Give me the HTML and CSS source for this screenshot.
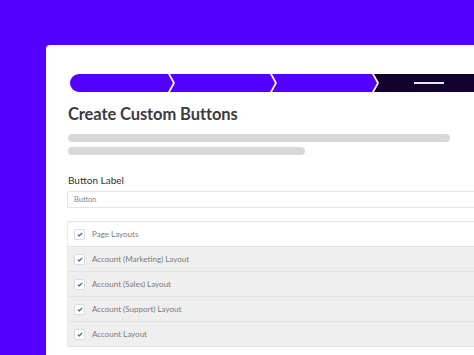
FILE: index.html
```html
<!DOCTYPE html>
<html>
<head>
<meta charset="utf-8">
<link rel="stylesheet" href="styles.css">
</head>
<body>
<div class="card">
  <div class="stepper">
    <div class="step step-first"></div>
    <div class="step step-mid"></div>
    <div class="step step-mid"></div>
    <div class="step step-last"><span class="dash"></span></div>
  </div>
  <h1 class="title">Create Custom Buttons</h1>
  <div class="skeleton">
    <div class="bar bar-long"></div>
    <div class="bar bar-short"></div>
  </div>
  <label class="field-label">Button Label</label>
  <div class="input">Button</div>
  <ul class="list">
    <li class="row row-white"><span class="check"><svg width="6" height="5" viewBox="0 0 6 5"><path d="M0.8 2.6 L2.3 4 L5.2 0.8" fill="none" stroke="#3a5d9c" stroke-width="1.2"/></svg></span>Page Layouts</li>
    <li class="row"><span class="check"><svg width="6" height="5" viewBox="0 0 6 5"><path d="M0.8 2.6 L2.3 4 L5.2 0.8" fill="none" stroke="#3a5d9c" stroke-width="1.2"/></svg></span>Account (Marketing) Layout</li>
    <li class="row"><span class="check"><svg width="6" height="5" viewBox="0 0 6 5"><path d="M0.8 2.6 L2.3 4 L5.2 0.8" fill="none" stroke="#3a5d9c" stroke-width="1.2"/></svg></span>Account (Sales) Layout</li>
    <li class="row"><span class="check"><svg width="6" height="5" viewBox="0 0 6 5"><path d="M0.8 2.6 L2.3 4 L5.2 0.8" fill="none" stroke="#3a5d9c" stroke-width="1.2"/></svg></span>Account (Support) Layout</li>
    <li class="row"><span class="check"><svg width="6" height="5" viewBox="0 0 6 5"><path d="M0.8 2.6 L2.3 4 L5.2 0.8" fill="none" stroke="#3a5d9c" stroke-width="1.2"/></svg></span>Account Layout</li>
  </ul>
</div>
</body>
</html>
```

FILE: styles.css
```css
html, body {
  margin: 0;
  padding: 0;
  background: #5200ff;
  height: 355px;
  overflow: hidden;
  font-family: "Lato", "Liberation Sans", sans-serif;
}
.card {
  margin: 45px 0 0 46px;
  height: 310px;
  background: #fff;
  border-top-left-radius: 4px;
  padding: 29px 0 0 22px;
  box-sizing: border-box;
  overflow: hidden;
}
.stepper {
  display: flex;
  height: 18px;
  margin-left: 2px;
}
.step {
  height: 18px;
  background: #5200ff;
  flex: none;
}
.step + .step {
  margin-left: -3px;
}
.step-first {
  width: 103px;
  border-radius: 9px 0 0 9px;
  clip-path: polygon(0 0, calc(100% - 5px) 0, 100% 50%, calc(100% - 5px) 100%, 0 100%);
}
.step-mid {
  width: 105px;
  clip-path: polygon(0 0, calc(100% - 5px) 0, 100% 50%, calc(100% - 5px) 100%, 0 100%, 5px 50%);
}
.step-last {
  flex: 1;
  background: #12002e;
  clip-path: polygon(0 0, 100% 0, 100% 100%, 0 100%, 5px 50%);
  display: flex;
  align-items: center;
  padding-left: 40px;
}
.dash {
  width: 30px;
  height: 2px;
  background: #e8e6f0;
}
.title {
  margin: 12px 0 0 0;
  font-size: 16.5px;
  font-weight: 700;
  color: #3b3b3b;
  line-height: 20px;
  letter-spacing: -0.1px;
}
.skeleton {
  margin-top: 10px;
  display: flex;
  flex-direction: column;
  gap: 5px;
}
.bar {
  height: 8px;
  border-radius: 4px;
  background: #d8d8d8;
}
.bar-long { width: 382px; }
.bar-short { width: 237px; }
.field-label {
  display: block;
  margin-top: 19px;
  font-size: 10px;
  color: #333;
  line-height: 13px;
}
.input {
  margin: 4px 0 0 -1px;
  height: 17px;
  border: 1px solid #e6e6e6;
  border-right: none;
  border-radius: 2px 0 0 2px;
  box-sizing: border-box;
  font-size: 7.5px;
  color: #888;
  padding-left: 6px;
  display: flex;
  align-items: center;
}
.list {
  list-style: none;
  margin: 13px 0 0 -1px;
  padding: 0;
  border-top: 1px solid #e3e3e3;
}
.row {
  height: 24px;
  border-bottom: 1px solid #e3e3e3;
  border-left: 1px solid #ececec;
  background: #efefef;
  display: flex;
  align-items: center;
  padding-left: 6px;
  font-size: 8px;
  color: #7a7a7a;
}
.row-white { background: #fff; }
.check {
  width: 9px;
  height: 9px;
  border: 1px solid #dcdcdc;
  background: #fff;
  border-radius: 1px;
  display: flex;
  align-items: center;
  justify-content: center;
  margin-right: 7px;
  flex: none;
}
```
